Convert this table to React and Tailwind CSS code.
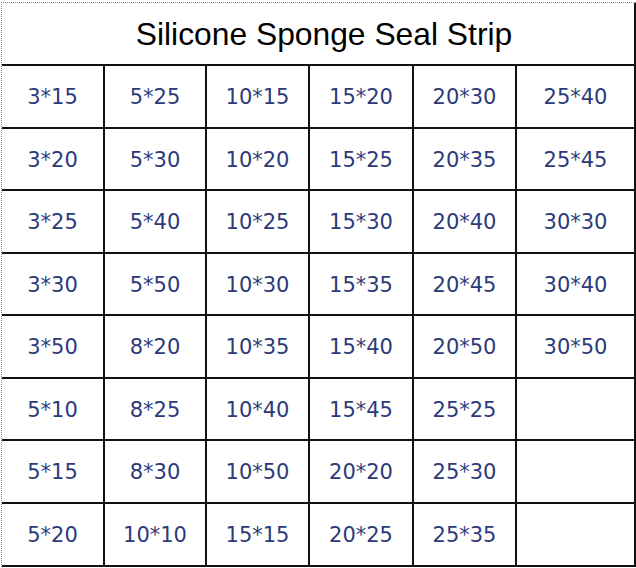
import React from "react";

const rows = [
  ["3*15", "5*25", "10*15", "15*20", "20*30", "25*40"],
  ["3*20", "5*30", "10*20", "15*25", "20*35", "25*45"],
  ["3*25", "5*40", "10*25", "15*30", "20*40", "30*30"],
  ["3*30", "5*50", "10*30", "15*35", "20*45", "30*40"],
  ["3*50", "8*20", "10*35", "15*40", "20*50", "30*50"],
  ["5*10", "8*25", "10*40", "15*45", "25*25", ""],
  ["5*15", "8*30", "10*50", "20*20", "25*30", ""],
  ["5*20", "10*10", "15*15", "20*25", "25*35", ""],
];

export default function App() {
  return (
    <div className="w-[636px] h-[568px] bg-white overflow-hidden">
      <div className="mt-[2px] ml-[1px] border-t border-l border-dotted border-[#8a8a8a] grid grid-cols-[103px_102px_103px_104px_103px_119px] grid-rows-[63px_63px_62px_63px_62px_63px_62px_63px_63px] w-[635px]">
        <div className="col-span-6 border-r-2 border-b-2 border-[#111] flex items-center justify-center pl-[12px] pt-[2px] text-[31.8px] text-black" style={{ fontFamily: '"Liberation Sans", Arial, sans-serif' }}>
          Silicone Sponge Seal Strip
        </div>
        {rows.flat().map((t, i) => (
          <div
            key={i}
            className="border-r-2 border-b-2 border-[#111] flex items-center justify-center pt-[3px] text-[21px] text-[#2c3a7a]"
            style={{ fontFamily: '"DejaVu Sans", Verdana, sans-serif' }}
          >
            {t}
          </div>
        ))}
      </div>
    </div>
  );
}
